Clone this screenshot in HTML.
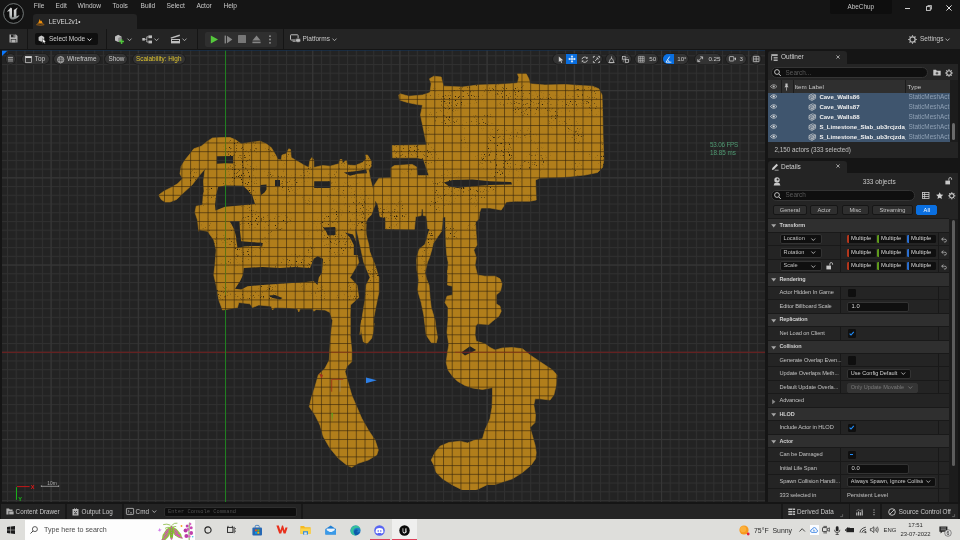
<!DOCTYPE html>
<html>
<head>
<meta charset="utf-8">
<title>LEVEL2v1 - Unreal Editor</title>
<style>
*{box-sizing:border-box;margin:0;padding:0}
html,body{width:960px;height:540px;overflow:hidden;background:#151515}
body{position:relative;will-change:transform;font-family:"Liberation Sans",sans-serif;font-size:6.4px;color:#c0c0c0;line-height:1}
.a{position:absolute;white-space:nowrap}
.t{position:absolute;white-space:nowrap;transform:translateY(-50%)}
svg{position:absolute;overflow:visible}
/* top */
#titlebar{left:0;top:0;width:960px;height:29px;background:#151515}
#tab{left:33px;top:14px;width:104px;height:15px;background:#242424;border-radius:3px 3px 0 0}
#toolbar{left:0;top:29px;width:960px;height:20px;background:#242424}
.sep{position:absolute;top:29px;width:1px;height:20px;background:#151515}
.dk{position:absolute;background:#0f0f0f;border-radius:2px}
/* viewport */
#vp{left:2px;top:50px;width:763px;height:452px;background:#252525;overflow:hidden}
.pill{position:absolute;top:54.2px;height:9.8px;border-radius:5px;background:#333;box-shadow:0 0 0 0.6px #181818;color:#c8c8c8;font-size:6.3px;line-height:9px;white-space:nowrap}
/* right */
.panel{position:absolute;background:#242424}
.ptab{position:absolute;background:#242424;border-radius:3px 3px 0 0;height:13px;width:79px;left:768px}
.hdr{position:absolute;left:768px;width:181px;height:12.5px;background:#2f2f2f}
.row{position:absolute;left:768px;width:181px;height:12.6px;background:#242424}
.hl{position:absolute;font-weight:bold;font-size:5.5px;letter-spacing:-0.15px;color:#d0d0d0;white-space:nowrap;transform:translateY(-50%);left:779.5px}
.rl{position:absolute;font-size:5.7px;letter-spacing:-0.1px;color:#c0c0c0;white-space:nowrap;transform:translateY(-50%);left:779.5px}
.tri{position:absolute;left:771px;width:0;height:0;border-left:2.4px solid transparent;border-right:2.4px solid transparent;border-top:3px solid #b0b0b0}
.cb{position:absolute;left:847.5px;width:8px;height:8.4px;background:#0f0f0f;border-radius:1.2px}
.inp{position:absolute;background:#0f0f0f;border-radius:2px;border:0.5px solid #333;color:#d0d0d0}
.mul{position:absolute;height:8px;width:28.5px;background:#0f0f0f;border-radius:1.2px;color:#d8d8d8;font-size:5.85px;line-height:7.4px;padding-left:3.8px;overflow:hidden}
.mul i{position:absolute;left:0;top:0;width:1.6px;height:8px}
.fb{position:absolute;top:205.4px;height:10px;border-radius:2px;background:#2f2f2f;border:0.6px solid #161616;color:#c0c0c0;text-align:center;line-height:8.6px;font-size:5.7px}
/* bottom */
#status{left:0;top:504px;width:960px;height:15.5px;background:#242424}
#taskbar{left:0;top:519.4px;width:960px;height:20.6px;background:#dededb;color:#222}
</style>
</head>
<body>
<!--TOP-->
<div class="a" id="titlebar"></div>
<!-- UE logo -->
<svg style="left:3px;top:2.7px" width="21" height="21" viewBox="0 0 21 21"><defs><linearGradient id="ug" x1="0" y1="0" x2="0" y2="1"><stop offset="0" stop-color="#d8d8d8"/><stop offset="0.6" stop-color="#c4c8c8"/><stop offset="1" stop-color="#7a8080"/></linearGradient></defs><circle cx="10.5" cy="10.5" r="9.9" fill="#0e0e0e" stroke="#7f8585" stroke-width="0.9"/><path d="M3.8 8.8 L7.8 4.6 L9 5.6 L9 13.6 Q9 14.6 9.8 14.6 L10.8 14 L10.8 7 L14.8 4.6 L13.4 7 L13.4 13.6 L16.6 12 Q15.4 14.4 13.4 15.4 L10.6 16.6 Q9.6 16.2 8.6 16.6 Q6.4 15.6 6.4 13.6 L6.4 8.2 Q5.2 8 3.8 8.8 Z" fill="url(#ug)"/></svg>
<div class="t" style="left:33.7px;top:5.7px;font-size:6.6px;color:#c8c8c8">File</div>
<div class="t" style="left:55.5px;top:5.7px;font-size:6.6px;color:#c8c8c8">Edit</div>
<div class="t" style="left:77.6px;top:5.7px;font-size:6.6px;color:#c8c8c8">Window</div>
<div class="t" style="left:112.5px;top:5.7px;font-size:6.6px;color:#c8c8c8">Tools</div>
<div class="t" style="left:140.6px;top:5.7px;font-size:6.6px;color:#c8c8c8">Build</div>
<div class="t" style="left:166.6px;top:5.7px;font-size:6.6px;color:#c8c8c8">Select</div>
<div class="t" style="left:196.4px;top:5.7px;font-size:6.6px;color:#c8c8c8">Actor</div>
<div class="t" style="left:223.4px;top:5.7px;font-size:6.6px;color:#c8c8c8">Help</div>
<div class="a" id="tab"></div>
<svg style="left:36.2px;top:17.6px" width="8.6" height="8" viewBox="0 0 8.6 8"><path d="M0.8 5.6 L2.4 4.8 L3.7 0.9 L4.7 3.2 L5.5 2.4 L6.4 4.8 L7.8 5.6 Z" fill="#f0900c"/><path d="M0.3 6.7 Q4.3 7.7 8.3 6.7" stroke="#d87c10" stroke-width="0.7" fill="none"/></svg>
<div class="t" style="left:48.8px;top:22px;font-size:6.3px;letter-spacing:-0.05px;color:#d8d8d8">LEVEL2v1•</div>
<div class="a" style="left:830px;top:0;width:61.5px;height:13.5px;background:#0e0e0e;border-radius:0 0 2px 2px"></div>
<div class="t" style="left:847.5px;top:6.6px;font-size:6.4px;color:#c8c8c8">AbeChup</div>
<div class="a" style="left:905px;top:8.3px;width:5px;height:0.8px;background:#d0d0d0"></div>
<svg style="left:925.5px;top:5px" width="6" height="6" viewBox="0 0 6 6"><rect x="0.5" y="1.6" width="3.8" height="3.8" fill="none" stroke="#d0d0d0" stroke-width="0.9"/><path d="M1.8 1.4 V0.5 H5.5 V4.2 H4.5" fill="none" stroke="#d0d0d0" stroke-width="0.8"/></svg>
<svg style="left:946.2px;top:5.2px" width="6" height="6" viewBox="0 0 6 6"><path d="M0.4 0.4 L5.6 5.6 M5.6 0.4 L0.4 5.6" stroke="#e0e0e0" stroke-width="1"/></svg>
<!-- toolbar -->
<div class="a" id="toolbar"></div>
<svg style="left:8.6px;top:34.1px" width="9" height="9" viewBox="0 0 9 9"><path d="M0.5 0.5 H7 L8.5 2 V8.5 H0.5 Z" fill="#b4b4b4"/><rect x="2" y="0.5" width="4.2" height="2.8" fill="#242424"/><rect x="4.6" y="0.9" width="1" height="2" fill="#b4b4b4"/><rect x="1.8" y="5" width="5.4" height="3.5" fill="#242424"/><rect x="2.4" y="5.6" width="4.2" height="2.9" fill="#b4b4b4"/></svg>
<div class="sep" style="left:26.5px"></div>
<div class="dk" style="left:35px;top:33px;width:63px;height:12px"></div>
<svg style="left:38px;top:35px" width="9" height="9" viewBox="0 0 9 9"><path d="M0.6 2 L3.4 0.6 L6.2 2 V5.4 L3.4 6.8 L0.6 5.4 Z" fill="#c8c8c8"/><path d="M4.6 3.6 L4.6 8.4 L5.8 7.3 L6.6 8.8 L7.3 8.4 L6.6 7 L8 6.8 Z" fill="#fff" stroke="#0f0f0f" stroke-width="0.4"/></svg>
<div class="t" style="left:49px;top:39px;font-size:6.5px;color:#d0d0d0">Select Mode</div>
<svg class="chev" style="left:87.3px;top:37.5px" width="5" height="3.4" viewBox="0 0 5 3.4"><path d="M0.5 0.6 L2.5 2.7 L4.5 0.6" fill="none" stroke="#d8d8d8" stroke-width="1"/></svg>
<div class="sep" style="left:106px"></div>
<svg style="left:114px;top:34px" width="11" height="11" viewBox="0 0 11 11"><path d="M1 2.4 L4.2 0.8 L7.4 2.4 V6.4 L4.2 8 L1 6.4 Z" fill="#bdbdbd"/><path d="M4.2 4 L7.4 2.4 V6.4 L4.2 8 Z" fill="#8f8f8f"/><path d="M7.6 5.2 V10 M5.2 7.6 H10" stroke="#4ec43a" stroke-width="1.5"/></svg>
<svg style="left:126.8px;top:37.5px" width="5" height="3.4" viewBox="0 0 5 3.4"><path d="M0.5 0.6 L2.5 2.7 L4.5 0.6" fill="none" stroke="#c0c0c0" stroke-width="0.8"/></svg>
<svg style="left:141.5px;top:34.5px" width="11" height="9" viewBox="0 0 11 9"><rect x="0.3" y="3" width="2.6" height="2.6" fill="#bdbdbd"/><rect x="6.4" y="0.4" width="3.6" height="2.8" fill="#bdbdbd"/><rect x="6.4" y="5.6" width="3.6" height="2.8" fill="#bdbdbd"/><path d="M2.9 4.3 H4.8 M4.8 1.8 V7 M4.8 1.8 H6.4 M4.8 7 H6.4" stroke="#bdbdbd" stroke-width="0.8" fill="none"/></svg>
<svg style="left:154px;top:37.5px" width="5" height="3.4" viewBox="0 0 5 3.4"><path d="M0.5 0.6 L2.5 2.7 L4.5 0.6" fill="none" stroke="#c0c0c0" stroke-width="0.8"/></svg>
<svg style="left:169.5px;top:34px" width="11" height="10" viewBox="0 0 11 10"><path d="M0.6 3.4 L9.6 0.6 L10 2 L1 4.8 Z" fill="#bdbdbd"/><rect x="1" y="5" width="9" height="4.4" fill="#bdbdbd"/><rect x="2" y="6" width="7" height="1" fill="#242424"/></svg>
<svg style="left:181.5px;top:37.5px" width="5" height="3.4" viewBox="0 0 5 3.4"><path d="M0.5 0.6 L2.5 2.7 L4.5 0.6" fill="none" stroke="#c0c0c0" stroke-width="0.8"/></svg>
<div class="sep" style="left:197px"></div>
<div class="a" style="left:205px;top:31.5px;width:71.5px;height:15.5px;background:#2f2f2f;border-radius:2px"></div>
<svg style="left:209.5px;top:34.5px" width="9" height="9" viewBox="0 0 9 9"><path d="M0.8 0.4 L8 4.5 L0.8 8.6 Z" fill="#55c83c"/></svg>
<svg style="left:223.5px;top:34.5px" width="9" height="9" viewBox="0 0 9 9"><rect x="0.6" y="0.6" width="1.4" height="7.8" fill="#858585"/><path d="M3 0.8 L8.4 4.5 L3 8.2 Z" fill="#858585"/></svg>

<div class="a" style="left:238.3px;top:35.3px;width:7.4px;height:7.4px;background:#777;border-radius:0.6px"></div>
<svg style="left:251.5px;top:34.8px" width="9" height="9" viewBox="0 0 9 9"><path d="M4.5 0.6 L8.6 5.6 H0.4 Z" fill="#858585"/><rect x="0.4" y="6.6" width="8.2" height="1.6" fill="#858585"/></svg>
<svg style="left:269px;top:34.5px" width="2" height="9" viewBox="0 0 2 9"><circle cx="1" cy="1.2" r="0.9" fill="#999"/><circle cx="1" cy="4.5" r="0.9" fill="#999"/><circle cx="1" cy="7.8" r="0.9" fill="#999"/></svg>
<div class="sep" style="left:283px"></div>
<svg style="left:290px;top:34px" width="11" height="10" viewBox="0 0 11 10"><rect x="0.5" y="0.8" width="7.6" height="5.2" rx="0.6" fill="none" stroke="#bdbdbd" stroke-width="1"/><rect x="2.6" y="6.8" width="3.4" height="0.9" fill="#bdbdbd"/><rect x="5.6" y="4.6" width="5" height="3.6" rx="1.4" fill="#bdbdbd" stroke="#242424" stroke-width="0.5"/></svg>
<div class="t" style="left:302.5px;top:39px;font-size:6.5px;color:#c8c8c8">Platforms</div>
<svg style="left:332px;top:37.5px" width="5" height="3.4" viewBox="0 0 5 3.4"><path d="M0.5 0.6 L2.5 2.7 L4.5 0.6" fill="none" stroke="#c0c0c0" stroke-width="0.8"/></svg>
<svg style="left:908px;top:34.5px" width="9" height="9" viewBox="0 0 9 9"><circle cx="4.5" cy="4.5" r="2.6" fill="none" stroke="#c0c0c0" stroke-width="1.2"/><path d="M4.5 0.2 V1.6 M4.5 7.4 V8.8 M0.2 4.5 H1.6 M7.4 4.5 H8.8 M1.5 1.5 L2.4 2.4 M6.6 6.6 L7.5 7.5 M1.5 7.5 L2.4 6.6 M6.6 2.4 L7.5 1.5" stroke="#c0c0c0" stroke-width="1.1"/></svg>
<div class="t" style="left:920px;top:39px;font-size:6.5px;color:#c8c8c8">Settings</div>
<svg style="left:945px;top:37.5px" width="5" height="3.4" viewBox="0 0 5 3.4"><path d="M0.5 0.6 L2.5 2.7 L4.5 0.6" fill="none" stroke="#c0c0c0" stroke-width="0.8"/></svg>

<!--/TOP-->
<!--VIEWPORT-->
<div class="a" id="vp">
<svg style="left:-2px;top:-50px" width="960" height="540" viewBox="0 0 960 540">
<defs>
<pattern id="g1" x="7.00" y="2.95" width="8.72" height="8.72" patternUnits="userSpaceOnUse"><rect x="0" y="0" width="1" height="8.72" fill="#303030"/><rect x="0" y="0" width="8.72" height="1" fill="#303030"/></pattern>
<pattern id="g2" x="50.60" y="2.95" width="87.2" height="87.2" patternUnits="userSpaceOnUse"><rect x="0" y="0" width="1" height="87.2" fill="#363636"/><rect x="0" y="0" width="87.2" height="1" fill="#363636"/></pattern>
<pattern id="gd" x="7.00" y="2.95" width="8.72" height="8.72" patternUnits="userSpaceOnUse"><rect x="0" y="0" width="1" height="8.72" fill="#33240c" fill-opacity="0.62"/><rect x="0" y="0" width="8.72" height="1" fill="#33240c" fill-opacity="0.62"/></pattern>
<mask id="m" maskUnits="userSpaceOnUse" x="0" y="0" width="960" height="540"><path d="M158.8 195.0 L163.8 191.2 L171.2 187.5 L177.5 183.8 L182.5 178.8 L180.0 173.8 L181.2 166.2 L185.0 160.0 L190.0 153.8 L193.8 148.8 L201.2 146.2 L207.5 141.2 L212.5 138.0 L222.5 137.5 L230.0 137.5 L235.0 139.5 L241.2 143.8 L250.0 142.5 L260.0 141.2 L266.2 143.8 L271.2 147.5 L275.0 153.8 L278.0 159.5 L281.2 160.0 L282.0 155.0 L286.2 153.8 L288.8 148.8 L290.5 149.5 L291.2 157.5 L297.5 161.2 L303.8 165.0 L308.8 167.5 L310.0 160.0 L312.0 157.5 L313.8 160.0 L313.8 167.5 L322.5 165.5 L330.0 166.2 L338.8 163.8 L340.0 159.5 L342.0 159.5 L342.5 163.8 L346.2 160.0 L347.5 165.0 L355.0 165.5 L362.5 162.5 L366.2 158.8 L365.5 155.0 L367.5 155.0 L371.2 161.2 L371.2 166.2 L368.8 170.0 L370.0 177.5 L372.5 187.5 L375.0 195.0 L375.0 205.0 L371.2 215.0 L367.5 218.8 L365.0 225.0 L366.2 235.0 L368.8 245.0 L370.0 255.0 L355.0 227.5 L356.2 250.0 L358.8 262.5 L353.0 272.5 L350.0 277.5 L357.0 285.0 L358.8 297.5 L350.5 305.0 L350.0 320.0 L350.0 335.0 L350.0 316.7 L350.0 333.3 L351.7 350.0 L351.7 361.7 L346.7 366.7 L345.0 371.7 L348.3 383.3 L351.7 395.0 L356.7 406.7 L361.7 418.3 L368.3 430.0 L375.0 440.0 L378.3 450.0 L376.7 455.0 L368.3 460.0 L358.3 463.3 L351.7 467.3 L346.7 465.0 L338.3 458.3 L330.0 448.3 L323.3 436.7 L320.0 425.0 L315.0 415.0 L309.3 406.7 L311.7 396.7 L315.0 386.7 L318.3 375.0 L325.0 368.3 L329.3 360.0 L330.0 346.7 L331.0 333.3 L332.7 320.0 L330.0 310.0 L332.5 320.0 L330.0 312.5 L325.0 310.0 L316.2 309.5 L313.8 311.2 L312.5 308.8 L300.0 308.8 L298.8 312.0 L297.5 308.8 L290.0 308.0 L275.0 307.5 L272.5 310.0 L271.2 306.2 L258.8 305.0 L252.5 307.5 L250.0 303.8 L238.8 302.5 L237.5 307.5 L222.5 310.0 L218.8 300.0 L216.2 285.0 L213.8 275.0 L215.0 265.0 L216.2 250.0 L213.8 240.0 L207.5 231.2 L200.0 230.0 L198.8 231.2 L197.5 220.0 L195.0 212.5 L196.2 206.2 L202.5 205.0 L203.2 195.0 L204.0 191.0 L203.5 181.0 L204.8 170.8 L206.5 167.2 L199.5 175.2 L192.2 184.8 L184.8 191.5 L176.5 199.5 L170.0 202.0 L165.2 202.0 L161.2 199.5 Z M357.5 225.5 L366.2 223.8 L365.5 242.5 L370.0 252.5 L375.0 265.0 L378.8 277.5 L378.8 292.5 L376.2 305.0 L373.8 317.5 L372.5 335.0 L374.0 323.3 L373.3 330.0 L371.7 338.3 L366.7 344.0 L363.3 341.7 L361.7 333.3 L360.7 326.7 L361.7 320.0 L360.0 335.0 L362.5 315.0 L365.0 300.0 L366.2 285.0 L370.0 277.5 L363.8 262.5 L360.0 245.0 L356.2 227.5 Z M398.8 95.0 L400.0 93.8 L408.8 96.2 L422.5 95.0 L430.0 92.5 L431.2 83.8 L429.5 78.8 L433.8 76.2 L441.2 77.0 L442.5 82.5 L443.8 86.2 L462.5 87.0 L477.5 85.0 L495.0 84.5 L510.0 83.8 L517.5 83.0 L518.8 77.5 L517.5 73.8 L526.2 73.8 L528.8 78.8 L530.0 83.8 L545.0 85.0 L565.0 84.5 L580.0 85.5 L592.5 86.2 L598.8 88.8 L602.0 95.0 L602.5 110.0 L603.0 135.0 L603.8 160.0 L602.5 167.5 L602.5 167.5 L597.5 172.5 L585.0 175.0 L565.0 177.0 L550.0 177.5 L540.0 178.0 L535.5 180.0 L536.2 200.0 L530.0 201.2 L515.0 201.2 L506.2 202.0 L503.8 206.2 L501.2 210.0 L490.0 208.0 L481.2 208.0 L479.5 212.5 L478.8 218.8 L475.5 222.5 L476.2 235.0 L477.0 245.0 L473.8 250.0 L476.2 257.5 L475.0 265.0 L476.2 270.0 L477.5 275.0 L485.0 276.2 L495.0 276.2 L500.0 278.8 L502.0 283.8 L500.5 291.2 L496.2 295.0 L496.2 303.8 L500.0 306.2 L501.2 311.2 L498.8 316.2 L492.5 321.2 L488.8 324.5 L477.5 323.8 L475.5 326.2 L475.0 335.0 L476.2 341.2 L485.0 343.8 L490.0 347.5 L495.0 350.0 L502.5 348.0 L512.5 347.5 L522.5 348.8 L530.0 355.0 L537.5 360.0 L545.0 365.0 L552.5 370.0 L557.0 375.0 L557.0 375.0 L556.2 385.0 L553.8 395.0 L550.0 400.0 L540.0 398.8 L535.0 398.8 L533.8 405.0 L535.5 415.0 L535.0 422.5 L530.0 427.5 L532.5 436.2 L535.0 445.0 L536.2 452.5 L535.5 458.8 L531.2 465.0 L522.5 472.5 L512.5 478.8 L502.5 482.0 L495.0 484.5 L487.5 484.5 L478.8 488.8 L470.0 492.5 L462.5 490.0 L452.5 485.0 L442.5 478.8 L436.2 472.5 L433.8 465.0 L431.2 460.0 L435.0 452.5 L440.0 446.2 L448.8 442.5 L460.0 441.2 L467.5 443.0 L475.0 440.0 L482.5 438.8 L485.0 430.0 L490.0 418.8 L492.0 407.5 L492.5 395.0 L492.5 387.5 L492.5 387.5 L482.5 389.5 L472.5 388.0 L465.0 385.5 L457.5 381.2 L452.5 376.2 L448.0 370.0 L446.2 362.5 L447.5 352.5 L448.8 345.0 L447.0 332.5 L448.0 320.0 L448.0 307.5 L445.0 302.5 L447.0 296.2 L452.5 295.0 L452.5 286.2 L447.5 285.0 L448.0 270.0 L447.5 275.0 L448.2 262.5 L446.8 255.0 L446.0 245.0 L445.5 225.0 L445.5 215.5 L427.8 228.9 L426.7 216.0 L423.3 215.6 L422.9 208.9 L421.6 208.9 L421.1 215.6 L415.6 216.7 L414.4 229.3 L385.6 228.9 L385.6 217.8 L380.0 216.7 L377.8 204.4 L372.2 195.6 L373.3 186.7 L378.9 178.2 L391.1 177.8 L391.1 167.8 L394.4 165.6 L412.2 164.4 L416.7 167.1 L417.3 175.6 L428.9 175.6 L423.3 158.9 L416.7 157.8 L392.7 157.8 L392.2 145.6 L426.7 144.9 L420.5 115.0 L422.5 105.0 L417.5 104.5 L407.5 102.5 L399.5 100.0 Z M429.4 229.4 L426.2 215.5 L423.5 214.0 L445.6 214.0 L445.6 217.0 L442.8 217.0 L441.7 231.0 L437.8 236.7 L433.3 243.3 L431.7 250.0 L429.4 257.8 L427.5 262.0 L425.0 272.5 L426.5 279.0 L429.0 285.0 L430.0 297.5 L431.2 307.5 L435.0 320.0 L436.2 330.0 L437.5 337.5 L436.2 343.0 L431.2 342.5 L426.2 335.0 L425.0 325.0 L423.8 315.0 L421.2 302.5 L417.5 290.0 L418.8 280.0 L417.0 270.0 L416.7 260.0 L417.2 255.6 L419.4 248.9 L425.0 244.4 Z" fill="#fff" stroke="#fff" stroke-width="0.6" stroke-linejoin="round"/><path d="M216.8 156.2 L233.2 156.0 L233.2 163.5 L225.0 163.2 L216.8 163.8 Z M218.0 187.0 L225.0 185.5 L243.0 185.8 L248.0 190.5 L252.5 196.2 L255.0 204.0 L240.0 205.5 L225.0 206.8 L215.5 210.5 L215.0 205.0 L216.2 195.0 Z M260.5 185.0 L266.5 184.5 L266.5 189.5 L264.5 192.5 L261.2 195.0 L260.0 190.0 Z M275.0 180.0 L280.0 180.0 L280.0 186.2 L275.0 186.2 Z M314.2 181.2 L330.5 181.2 L330.5 188.0 L314.2 188.0 Z M343.8 172.5 L355.0 171.2 L366.2 169.5 L367.0 173.2 L357.5 173.8 L350.0 175.8 Z M230.0 221.2 L238.8 221.2 L240.0 230.0 L238.5 240.0 L240.5 243.8 L261.2 242.5 L262.5 245.5 L243.8 246.5 L237.5 248.0 L236.2 240.0 L237.5 231.2 L233.8 228.8 Z M324.2 227.5 L335.5 227.5 L335.5 235.0 L328.0 235.5 Z M345.0 232.5 L353.0 234.5 L357.5 245.0 L358.8 255.0 L353.8 255.0 L353.8 245.0 L350.0 237.5 Z M243.8 268.0 L262.5 267.0 L280.0 268.0 L295.0 267.0 L310.0 268.0 L313.8 258.8 L317.5 256.2 L323.0 258.8 L322.0 272.5 L318.8 277.5 L317.5 285.0 L313.8 281.2 L300.0 282.5 L280.0 283.8 L262.5 285.0 L247.5 286.2 L241.2 289.5 L235.0 288.8 L240.0 281.2 L243.0 275.0 Z M230.0 222.0 L239.5 221.2 L240.0 231.2 L241.2 241.2 L262.5 243.0 L262.5 246.2 L246.2 245.5 L240.0 244.5 L237.5 247.5 L236.2 237.5 L233.8 227.5 Z M323.0 227.5 L335.0 227.0 L335.0 234.5 L327.5 235.0 L326.2 231.2 Z M268.8 295.5 L275.0 295.0 L282.5 298.0 L280.0 299.5 L272.5 298.0 Z M443.8 182.5 L452.5 180.0 L472.5 179.5 L490.0 181.2 L511.2 182.0 L512.0 184.5 L490.0 185.0 L472.5 186.2 L457.5 188.0 L448.8 186.2 Z M461.2 352.5 L470.0 346.2 L476.2 350.0 L465.0 355.5 Z" fill="#000"/></mask>
<filter id="sp" x="0" y="0" width="100%" height="100%" color-interpolation-filters="sRGB"><feTurbulence type="fractalNoise" baseFrequency="0.85" numOctaves="2" seed="7" result="n"/><feColorMatrix in="n" type="matrix" values="0 0 0 0 0.16  0 0 0 0 0.12  0 0 0 0 0.05  7 0 0 0 -4.45" result="a"/><feTurbulence type="fractalNoise" baseFrequency="0.035" numOctaves="2" seed="11" result="l"/><feColorMatrix in="l" type="matrix" values="0 0 0 0 0  0 0 0 0 0  0 0 0 0 0  0 7 0 0 -3.4" result="lm"/><feComposite in="a" in2="lm" operator="in"/></filter>
</defs>
<rect x="0" y="50" width="766" height="453" fill="#232323"/>
<rect x="0" y="50" width="766" height="453" fill="url(#g1)"/>
<rect x="0" y="50" width="766" height="453" fill="url(#g2)"/>
<rect x="0" y="351.8" width="766" height="0.9" fill="#7a1a1a"/>
<rect x="225.05" y="50" width="0.9" height="453" fill="#1f8a1f"/>
<g mask="url(#m)"><rect x="140" y="60" width="500" height="430" fill="#b17e1b"/><rect x="140" y="60" width="500" height="430" fill="url(#gd)"/>
<rect x="425" y="80" width="185" height="160" fill="#000" filter="url(#sp)"/><rect x="190" y="140" width="250" height="160" fill="#000" filter="url(#sp)"/>
<rect x="331" y="351.8" width="20" height="0.9" fill="#8a3a14"/><rect x="225.05" y="130" width="0.9" height="165" fill="#5f7a14"/><rect x="455" y="351.8" width="160" height="0.9" fill="#8a3a14"/>
</g>
<path d="M366 377.4 L376.8 380.3 L366 383.3 Z" fill="#2d7fe6"/>
<path d="M319 373.4 L323 375 L321.6 378.6 Z" fill="#a3301a"/>
<path d="M331.7 391.7 V379.3 H343.3" fill="none" stroke="#9a3418" stroke-width="0.9"/>
<path d="M340 380 V391.7" fill="none" stroke="#9a8a72" stroke-width="0.7"/>
<path d="M331.4 413 L333 413 L332 422 Z" fill="#5aa01e"/>
<!-- axis indicator -->
<path d="M17 486.6 H29.6" stroke="#c01818" stroke-width="1"/>
<path d="M16.5 487.2 V499.8" stroke="#18b018" stroke-width="1"/>
<text x="30.8" y="488.8" font-size="5.6" font-weight="bold" fill="#e01818" font-family="Liberation Sans, sans-serif">X</text>
<text x="18.2" y="501.4" font-size="5.6" font-weight="bold" fill="#18c018" font-family="Liberation Sans, sans-serif">Y</text>
<path d="M41 486.3 H59 M41.3 485.3 V486.8 M58.7 485.3 V486.8" stroke="#b8b8b8" stroke-width="0.7" fill="none"/>
<text x="52" y="485.2" font-size="4.8" fill="#a8a8a8" text-anchor="middle" font-family="Liberation Sans, sans-serif">10m</text>
<text x="710" y="146.9" font-size="6.3" fill="#4f9a72" font-family="Liberation Sans, sans-serif" textLength="28.3">53.06 FPS</text>
<text x="710" y="154.8" font-size="6.3" fill="#4f9a72" font-family="Liberation Sans, sans-serif" textLength="26">18.85 ms</text>
<path d="M2 50.6 H7.6 L2 56 Z" fill="#0a78ff"/>
<rect x="2" y="50" width="764" height="0.7" fill="#16324f"/>
</svg>
</div>
<!-- viewport left pills -->
<div class="pill" style="left:5.8px;width:9.6px;top:54.3px;height:9.6px"></div>
<svg style="left:8.2px;top:57px" width="5" height="4.4" viewBox="0 0 5 4.4"><path d="M0 0.4 H5 M0 2.2 H5 M0 4 H5" stroke="#c8c8c8" stroke-width="0.75"/></svg>
<div class="pill" style="left:21.5px;width:27px"></div>
<svg style="left:25px;top:55.8px" width="7" height="7" viewBox="0 0 7 7"><rect x="0.4" y="0.4" width="6.2" height="6.2" fill="none" stroke="#c8c8c8" stroke-width="0.7"/><rect x="0.4" y="0.4" width="6.2" height="1.6" fill="#d8d8d8"/></svg>
<div class="t" style="left:34.8px;top:59.3px;font-size:6.4px;color:#c8c8c8">Top</div>
<div class="pill" style="left:53.8px;width:46.2px"></div>
<svg style="left:57.2px;top:55.6px" width="7.4" height="7.4" viewBox="0 0 7.4 7.4"><circle cx="3.7" cy="3.7" r="3.2" fill="none" stroke="#c0c0c0" stroke-width="0.7"/><ellipse cx="3.7" cy="3.7" rx="1.5" ry="3.2" fill="none" stroke="#c0c0c0" stroke-width="0.5"/><path d="M0.5 3.7 H6.9 M1 2 H6.4 M1 5.4 H6.4" stroke="#c0c0c0" stroke-width="0.5"/></svg>
<div class="t" style="left:67px;top:59.3px;font-size:6.4px;color:#c8c8c8">Wireframe</div>
<div class="pill" style="left:104.8px;width:22.4px"></div>
<div class="t" style="left:108.5px;top:59.3px;font-size:6.4px;color:#c8c8c8">Show</div>
<div class="pill" style="left:132.6px;width:52.6px"></div>
<div class="t" style="left:136px;top:59.3px;font-size:6.4px;color:#dcc22e">Scalability: High</div>
<!-- viewport right tools -->
<div class="pill" style="left:552.7px;width:49.6px;top:54px;height:10.3px;overflow:hidden"><div class="a" style="left:13px;top:-1px;width:11.2px;height:12px;background:#0a6fe0"></div></div>
<svg style="left:557.5px;top:55.6px" width="6" height="7.4" viewBox="0 0 6 7.4"><path d="M0.8 0.4 L0.8 6 L2.3 4.7 L3.3 6.9 L4.2 6.5 L3.2 4.4 L5.2 4.2 Z" fill="#d0d0d0"/></svg>
<svg style="left:567.7px;top:55.3px" width="8" height="8" viewBox="0 0 8 8"><path d="M4 0.2 L5.3 1.8 H4.4 V3.6 H6.2 V2.7 L7.8 4 L6.2 5.3 V4.4 H4.4 V6.2 H5.3 L4 7.8 L2.7 6.2 H3.6 V4.4 H1.8 V5.3 L0.2 4 L1.8 2.7 V3.6 H3.6 V1.8 H2.7 Z" fill="#fff"/></svg>
<svg style="left:580.5px;top:55.6px" width="7.4" height="7.4" viewBox="0 0 7.4 7.4"><path d="M1 3.2 A2.8 2.8 0 0 1 6 2.2 M6.4 4.2 A2.8 2.8 0 0 1 1.4 5.2" fill="none" stroke="#c8c8c8" stroke-width="0.9"/><path d="M6.6 0.8 V2.8 H4.6 Z M0.8 6.6 V4.6 H2.8 Z" fill="#c8c8c8"/></svg>
<svg style="left:592.5px;top:55.8px" width="7" height="7" viewBox="0 0 7 7"><path d="M0.4 2 V0.4 H2 M5 0.4 H6.6 V2 M6.6 5 V6.6 H5 M2 6.6 H0.4 V5" fill="none" stroke="#c8c8c8" stroke-width="0.8"/><path d="M2 5 L5 2 M3.4 2 H5 V3.6" stroke="#c8c8c8" stroke-width="0.8" fill="none"/></svg>
<div class="pill" style="left:606.2px;width:10.2px;top:54px;height:10.3px"></div>
<svg style="left:608px;top:55.6px" width="7" height="7.2" viewBox="0 0 7 7.2"><path d="M3.5 0.4 V3 M1.2 6.6 L2 3.4 Q3.5 1.8 5 3.4 L5.8 6.6 Z M0.4 6.6 H6.6" fill="none" stroke="#c8c8c8" stroke-width="0.7"/></svg>
<div class="pill" style="left:620.6px;width:10.2px;top:54px;height:10.3px"></div>
<svg style="left:622.3px;top:55.8px" width="7" height="7" viewBox="0 0 7 7"><rect x="0.6" y="0.6" width="2.6" height="2.6" fill="none" stroke="#c8c8c8" stroke-width="0.7"/><rect x="3.6" y="3.6" width="2.8" height="2.8" fill="none" stroke="#c8c8c8" stroke-width="0.7"/><path d="M1 5.4 L2.4 4.4 M5.4 1 L4.4 2.4" stroke="#c8c8c8" stroke-width="0.6"/></svg>
<div class="pill" style="left:635.2px;width:23.3px;top:54px;height:10.3px"></div>
<svg style="left:638px;top:55.8px" width="6.6" height="6.6" viewBox="0 0 6.6 6.6"><path d="M0.4 0.4 H6.2 V6.2 H0.4 Z M2.3 0.4 V6.2 M4.3 0.4 V6.2 M0.4 2.3 H6.2 M0.4 4.3 H6.2" fill="none" stroke="#c8c8c8" stroke-width="0.6"/></svg>
<div class="t" style="left:649.2px;top:59.2px;font-size:6.2px;color:#c8c8c8">50</div>
<div class="pill" style="left:662.7px;width:24.9px;top:54px;height:10.3px;overflow:hidden"><div class="a" style="left:-1px;top:-1px;width:12.4px;height:12px;background:#0a6fe0"></div></div>
<svg style="left:665.4px;top:55.8px" width="7" height="7" viewBox="0 0 7 7"><path d="M4.6 0.6 L1 6.2 H6.4" fill="none" stroke="#fff" stroke-width="0.8"/><path d="M2.4 3.8 Q4 4.4 4.2 6.2" fill="none" stroke="#fff" stroke-width="0.7"/></svg>
<div class="t" style="left:677.2px;top:59.2px;font-size:6.2px;color:#c8c8c8">10°</div>
<div class="pill" style="left:694.8px;width:26.7px;top:54px;height:10.3px"></div>
<svg style="left:697.4px;top:56px" width="6.4" height="6.4" viewBox="0 0 6.4 6.4"><path d="M1 5.4 L5.4 1 M3.2 0.8 H5.6 V3.2 M0.8 3.2 V5.6 H3.2" fill="none" stroke="#c8c8c8" stroke-width="0.85"/></svg>
<div class="t" style="left:708.4px;top:59.2px;font-size:6.2px;color:#c8c8c8">0.25</div>
<div class="pill" style="left:726px;width:19.6px;top:54px;height:10.3px"></div>
<svg style="left:729px;top:56.4px" width="7.4" height="5.6" viewBox="0 0 7.4 5.6"><rect x="0.4" y="0.6" width="4.4" height="4.4" rx="0.5" fill="none" stroke="#c8c8c8" stroke-width="0.8"/><path d="M5.2 2.8 L7 1.2 V4.4 Z" fill="#c8c8c8"/></svg>
<div class="t" style="left:739.6px;top:59.2px;font-size:6.2px;color:#c8c8c8">3</div>
<div class="pill" style="left:751px;width:10.4px;top:54px;height:10.3px"></div>
<svg style="left:753px;top:56.2px" width="6.4" height="6" viewBox="0 0 6.4 6"><path d="M0.4 0.4 H6 V5.6 H0.4 Z M3.2 0.4 V5.6 M0.4 3 H6" fill="none" stroke="#c8c8c8" stroke-width="0.7"/></svg>

<!--/VIEWPORT-->
<!--RIGHT-->
<div class="a" style="left:768px;top:50px;width:190px;height:14px;background:#151515"></div>
<div class="ptab" style="top:50.5px"></div>
<svg style="left:771.2px;top:53.5px" width="7" height="7" viewBox="0 0 7 7"><rect x="0.3" y="0.3" width="6.4" height="1.5" fill="#d0d0d0"/><path d="M0.6 2 V6.4 M2.6 3.4 H6.7 M2.6 5 H6.7 M2.6 6.5 H6.7" stroke="#d0d0d0" stroke-width="0.8"/></svg>
<div class="t" style="left:781px;top:57px;font-size:6.5px;color:#d0d0d0">Outliner</div>
<svg style="left:836.3px;top:55px" width="4" height="4" viewBox="0 0 4 4"><path d="M0.4 0.4 L3.6 3.6 M3.6 0.4 L0.4 3.6" stroke="#d0d0d0" stroke-width="0.7"/></svg>
<div class="panel" style="left:768px;top:63.5px;width:190px;height:94px"></div>
<div class="a" style="left:771.3px;top:67.3px;width:156.6px;height:11px;background:#0f0f0f;border-radius:5.5px;border:0.7px solid #343434"></div>
<svg style="left:774.3px;top:69.2px" width="7.4" height="7.6" viewBox="0 0 7.4 7.6"><circle cx="3" cy="3" r="2.4" fill="none" stroke="#d0d0d0" stroke-width="0.9"/><path d="M4.8 4.9 L6.8 7" stroke="#d0d0d0" stroke-width="1"/></svg>
<div class="t" style="left:785.6px;top:72.7px;font-size:6.4px;color:#5a5a5a">Search...</div>
<svg style="left:933px;top:69.4px" width="8" height="7" viewBox="0 0 8 7"><path d="M0.3 0.8 H3 L3.8 1.8 H7.7 V6.6 H0.3 Z" fill="#c8c8c8"/><path d="M4 2.8 V5.6 M2.6 4.2 H5.4" stroke="#242424" stroke-width="0.8"/></svg>
<svg style="left:945px;top:69px" width="8" height="8" viewBox="0 0 8 8"><circle cx="4" cy="4" r="2.3" fill="none" stroke="#c8c8c8" stroke-width="1.1"/><path d="M4 0.2 V1.5 M4 6.5 V7.8 M0.2 4 H1.5 M6.5 4 H7.8 M1.3 1.3 L2.2 2.2 M5.8 5.8 L6.7 6.7 M1.3 6.7 L2.2 5.8 M5.8 2.2 L6.7 1.3" stroke="#c8c8c8" stroke-width="1"/></svg>
<div class="a" style="left:768px;top:80.2px;width:182.4px;height:12.4px;background:#2f2f2f"></div>
<div class="a" style="left:780.6px;top:80.2px;width:0.8px;height:12.4px;background:#1c1c1c"></div>
<div class="a" style="left:792.6px;top:80.2px;width:0.8px;height:12.4px;background:#1c1c1c"></div>
<div class="a" style="left:905.4px;top:80.2px;width:0.8px;height:12.4px;background:#1c1c1c"></div>
<svg style="left:770px;top:84px" width="7.4" height="5" viewBox="0 0 7.4 5"><path d="M0.4 2.5 Q3.7 -1.2 7 2.5 Q3.7 6.2 0.4 2.5 Z" fill="none" stroke="#b8b8b8" stroke-width="0.7"/><circle cx="3.7" cy="2.5" r="1.1" fill="#b8b8b8"/></svg>
<svg style="left:783.6px;top:82.6px" width="5" height="8" viewBox="0 0 5 8"><path d="M1.4 0.4 H3.6 V3 L4.6 4.2 H0.4 L1.4 3 Z" fill="#c0c0c0"/><path d="M2.5 4.2 V7.6" stroke="#c0c0c0" stroke-width="0.7"/></svg>
<div class="t" style="left:794.6px;top:86.5px;font-size:6.25px;color:#c8c8c8">Item Label</div>
<div class="t" style="left:907.6px;top:86.5px;font-size:6.25px;color:#c8c8c8">Type</div>
<div class="a" style="left:768px;top:92.6px;width:182.4px;height:49px;background:#3f556e;overflow:hidden">
<svg style="left:2px;top:1.8px" width="7.4" height="5" viewBox="0 0 7.4 5"><path d="M0.4 2.5 Q3.7 -1.2 7 2.5 Q3.7 6.2 0.4 2.5 Z" fill="none" stroke="#e0e0e0" stroke-width="0.7"/><circle cx="3.7" cy="2.5" r="1.1" fill="#e0e0e0"/></svg>
<svg style="left:39.6px;top:0.2px" width="8.4" height="8" viewBox="0 0 8.4 8"><path d="M1 2.6 L4.6 0.8 L7.6 2 L7.6 5.4 L4 7.4 L1 6 Z M1 2.6 L4 4 L7.6 2 M4 4 V7.4 M2.6 1.8 L5.8 3 V6.4 M1 4.3 L4 5.7 L7.6 3.7" fill="none" stroke="#d8d8d8" stroke-width="0.6"/></svg>
<div class="t" style="left:51.4px;top:4.2px;font-size:6.05px;font-weight:bold;color:#f0f0f0;width:87px;overflow:hidden">Cave_Walls86</div>
<div class="t" style="left:140.4px;top:4.2px;font-size:6.4px;color:#8fa0b4">StaticMeshAct</div>
<svg style="left:2px;top:11.8px" width="7.4" height="5" viewBox="0 0 7.4 5"><path d="M0.4 2.5 Q3.7 -1.2 7 2.5 Q3.7 6.2 0.4 2.5 Z" fill="none" stroke="#e0e0e0" stroke-width="0.7"/><circle cx="3.7" cy="2.5" r="1.1" fill="#e0e0e0"/></svg>
<svg style="left:39.6px;top:10.2px" width="8.4" height="8" viewBox="0 0 8.4 8"><path d="M1 2.6 L4.6 0.8 L7.6 2 L7.6 5.4 L4 7.4 L1 6 Z M1 2.6 L4 4 L7.6 2 M4 4 V7.4 M2.6 1.8 L5.8 3 V6.4 M1 4.3 L4 5.7 L7.6 3.7" fill="none" stroke="#d8d8d8" stroke-width="0.6"/></svg>
<div class="t" style="left:51.4px;top:14.2px;font-size:6.05px;font-weight:bold;color:#f0f0f0;width:87px;overflow:hidden">Cave_Walls87</div>
<div class="t" style="left:140.4px;top:14.2px;font-size:6.4px;color:#8fa0b4">StaticMeshAct</div>
<svg style="left:2px;top:21.8px" width="7.4" height="5" viewBox="0 0 7.4 5"><path d="M0.4 2.5 Q3.7 -1.2 7 2.5 Q3.7 6.2 0.4 2.5 Z" fill="none" stroke="#e0e0e0" stroke-width="0.7"/><circle cx="3.7" cy="2.5" r="1.1" fill="#e0e0e0"/></svg>
<svg style="left:39.6px;top:20.2px" width="8.4" height="8" viewBox="0 0 8.4 8"><path d="M1 2.6 L4.6 0.8 L7.6 2 L7.6 5.4 L4 7.4 L1 6 Z M1 2.6 L4 4 L7.6 2 M4 4 V7.4 M2.6 1.8 L5.8 3 V6.4 M1 4.3 L4 5.7 L7.6 3.7" fill="none" stroke="#d8d8d8" stroke-width="0.6"/></svg>
<div class="t" style="left:51.4px;top:24.2px;font-size:6.05px;font-weight:bold;color:#f0f0f0;width:87px;overflow:hidden">Cave_Walls88</div>
<div class="t" style="left:140.4px;top:24.2px;font-size:6.4px;color:#8fa0b4">StaticMeshAct</div>
<svg style="left:2px;top:31.8px" width="7.4" height="5" viewBox="0 0 7.4 5"><path d="M0.4 2.5 Q3.7 -1.2 7 2.5 Q3.7 6.2 0.4 2.5 Z" fill="none" stroke="#e0e0e0" stroke-width="0.7"/><circle cx="3.7" cy="2.5" r="1.1" fill="#e0e0e0"/></svg>
<svg style="left:39.6px;top:30.2px" width="8.4" height="8" viewBox="0 0 8.4 8"><path d="M1 2.6 L4.6 0.8 L7.6 2 L7.6 5.4 L4 7.4 L1 6 Z M1 2.6 L4 4 L7.6 2 M4 4 V7.4 M2.6 1.8 L5.8 3 V6.4 M1 4.3 L4 5.7 L7.6 3.7" fill="none" stroke="#d8d8d8" stroke-width="0.6"/></svg>
<div class="t" style="left:51.4px;top:34.2px;font-size:6.05px;font-weight:bold;color:#f0f0f0;width:87px;overflow:hidden">S_Limestone_Slab_ub3rcjzda_</div>
<div class="t" style="left:140.4px;top:34.2px;font-size:6.4px;color:#8fa0b4">StaticMeshAct</div>
<svg style="left:2px;top:41.8px" width="7.4" height="5" viewBox="0 0 7.4 5"><path d="M0.4 2.5 Q3.7 -1.2 7 2.5 Q3.7 6.2 0.4 2.5 Z" fill="none" stroke="#e0e0e0" stroke-width="0.7"/><circle cx="3.7" cy="2.5" r="1.1" fill="#e0e0e0"/></svg>
<svg style="left:39.6px;top:40.2px" width="8.4" height="8" viewBox="0 0 8.4 8"><path d="M1 2.6 L4.6 0.8 L7.6 2 L7.6 5.4 L4 7.4 L1 6 Z M1 2.6 L4 4 L7.6 2 M4 4 V7.4 M2.6 1.8 L5.8 3 V6.4 M1 4.3 L4 5.7 L7.6 3.7" fill="none" stroke="#d8d8d8" stroke-width="0.6"/></svg>
<div class="t" style="left:51.4px;top:44.2px;font-size:6.05px;font-weight:bold;color:#f0f0f0;width:87px;overflow:hidden">S_Limestone_Slab_ub3rcjzda_</div>
<div class="t" style="left:140.4px;top:44.2px;font-size:6.4px;color:#8fa0b4">StaticMeshAct</div>
</div>
<div class="a" style="left:950.4px;top:80.2px;width:7.6px;height:61.4px;background:#1c1c1c"></div>
<div class="a" style="left:952.3px;top:123px;width:3.2px;height:17px;background:#6a6a6a;border-radius:1.6px"></div>
<div class="t" style="left:774.6px;top:149.8px;font-size:6.3px;color:#c0c0c0">2,150 actors (333 selected)</div>
<div class="ptab" style="top:160.8px;height:12px"></div>
<svg style="left:770.6px;top:163px" width="8" height="8" viewBox="0 0 8 8"><path d="M1.4 5 L5.6 0.8 L7 2.2 L2.8 6.4 L0.8 7 Z" fill="#d0d0d0"/><path d="M3.6 7.2 H7.6" stroke="#d0d0d0" stroke-width="0.7"/></svg>
<div class="t" style="left:781px;top:166.6px;font-size:6.5px;color:#d0d0d0">Details</div>
<svg style="left:836.3px;top:164.4px" width="4" height="4" viewBox="0 0 4 4"><path d="M0.4 0.4 L3.6 3.6 M3.6 0.4 L0.4 3.6" stroke="#d0d0d0" stroke-width="0.7"/></svg>
<div class="panel" style="left:768px;top:172.6px;width:190px;height:329.4px"></div>
<svg style="left:773.4px;top:177px" width="8" height="9" viewBox="0 0 8 9"><circle cx="4" cy="3" r="2.7" fill="#c8c8c8"/><circle cx="4.6" cy="2.6" r="1" fill="#242424"/><path d="M1.6 6 H6.4 L7.4 8.4 H0.6 Z" fill="#c8c8c8"/></svg>
<div class="t" style="left:862.7px;top:181.9px;font-size:6.45px;color:#c8c8c8">333 objects</div>
<svg style="left:944.6px;top:177px" width="7" height="8" viewBox="0 0 7 8"><rect x="0.4" y="3.6" width="4.6" height="3.8" fill="#c8c8c8"/><path d="M3.8 3.6 V2 Q3.8 0.5 5.2 0.5 Q6.6 0.5 6.6 2 V2.8" fill="none" stroke="#c8c8c8" stroke-width="0.8"/></svg>
<div class="a" style="left:771.3px;top:190.2px;width:144.2px;height:10.4px;background:#0f0f0f;border-radius:5.2px;border:0.7px solid #343434"></div>
<svg style="left:774.3px;top:191.8px" width="7.4" height="7.6" viewBox="0 0 7.4 7.6"><circle cx="3" cy="3" r="2.4" fill="none" stroke="#d0d0d0" stroke-width="0.9"/><path d="M4.8 4.9 L6.8 7" stroke="#d0d0d0" stroke-width="1"/></svg>
<div class="t" style="left:785.6px;top:195.2px;font-size:6.4px;color:#5a5a5a">Search</div>
<svg style="left:922px;top:192px" width="7.4" height="7" viewBox="0 0 7.4 7"><rect x="0.4" y="0.4" width="6.6" height="6.2" fill="none" stroke="#d0d0d0" stroke-width="0.8"/><path d="M0.4 2.5 H7 M0.4 4.5 H7 M2.6 0.4 V6.6" stroke="#d0d0d0" stroke-width="0.8"/></svg>
<svg style="left:936px;top:191.8px" width="7.4" height="7.2" viewBox="0 0 7.4 7.2"><path d="M3.7 0.2 L4.8 2.5 L7.3 2.8 L5.4 4.5 L5.9 7 L3.7 5.7 L1.5 7 L2 4.5 L0.1 2.8 L2.6 2.5 Z" fill="#d0d0d0"/></svg>
<svg style="left:948px;top:191.6px" width="7.6" height="7.6" viewBox="0 0 8 8"><circle cx="4" cy="4" r="2.3" fill="none" stroke="#c8c8c8" stroke-width="1.1"/><path d="M4 0.2 V1.5 M4 6.5 V7.8 M0.2 4 H1.5 M6.5 4 H7.8 M1.3 1.3 L2.2 2.2 M5.8 5.8 L6.7 6.7 M1.3 6.7 L2.2 5.8 M5.8 2.2 L6.7 1.3" stroke="#c8c8c8" stroke-width="1"/></svg>
<div class="fb" style="left:772.7px;width:34.4px">General</div>
<div class="fb" style="left:810px;width:28.2px">Actor</div>
<div class="fb" style="left:841.5px;width:27.6px">Misc</div>
<div class="fb" style="left:871.8px;width:41.3px">Streaming</div>
<div class="fb" style="left:916.2px;width:21.2px;background:#0a6fe0;border-color:#0a6fe0;color:#fff">All</div>
<div class="a" style="left:768px;top:218.5px;width:181.4px;height:283.5px;background:#161616"></div>
<div class="hdr" style="top:218.50px;height:13.79px"></div><div class="a" style="left:768px;top:218.10px;width:181.4px;height:0.9px;background:#191919"></div><svg style="left:770.6px;top:224.15px" width="5.4" height="3.6" viewBox="0 0 5.4 3.6"><path d="M0.2 0.2 H5.2 L2.7 3.4 Z" fill="#a8a8a8"/></svg><div class="hl" style="top:225.84px">Transform</div>
<div class="row" style="top:231.99px;height:13.79px"></div><div class="a" style="left:768px;top:231.59px;width:181.4px;height:0.9px;background:#191919"></div>
<div class="a" style="left:840.2px;top:231.99px;width:0.7px;height:13.79px;background:#181818"></div>
<div class="a" style="left:938.2px;top:231.99px;width:0.7px;height:13.79px;background:#181818"></div>
<div class="inp" style="left:779.6px;top:234.34px;width:42.2px;height:10px"></div><div class="t" style="left:783.6px;top:239.34px;color:#c0c0c0;font-size:5.6px">Location</div><svg style="left:811px;top:237.53px" width="4.6" height="3.2" viewBox="0 0 4.6 3.2"><path d="M0.4 0.5 L2.3 2.5 L4.2 0.5" fill="none" stroke="#c8c8c8" stroke-width="0.8"/></svg>
<div class="mul" style="left:847.3px;top:235.34px"><i style="background:#b2361c"></i>Multiple</div>
<div class="mul" style="left:877.3px;top:235.34px"><i style="background:#5f9a1c"></i>Multiple</div>
<div class="mul" style="left:907.3px;top:235.34px"><i style="background:#2a6fd0"></i>Multiple</div>
<svg style="left:940.6px;top:236.53px" width="6" height="5.6" viewBox="0 0 6 5.6"><path d="M2.4 0.6 L0.6 2.2 L2.4 3.8 M0.8 2.2 H4 Q5.4 2.2 5.4 3.6 Q5.4 5 4 5 H3" fill="none" stroke="#b8b8b8" stroke-width="0.75"/></svg>
<div class="row" style="top:245.48px;height:13.79px"></div><div class="a" style="left:768px;top:245.08px;width:181.4px;height:0.9px;background:#191919"></div>
<div class="a" style="left:840.2px;top:245.48px;width:0.7px;height:13.79px;background:#181818"></div>
<div class="a" style="left:938.2px;top:245.48px;width:0.7px;height:13.79px;background:#181818"></div>
<div class="inp" style="left:779.6px;top:247.82px;width:42.2px;height:10px"></div><div class="t" style="left:783.6px;top:252.82px;color:#c0c0c0;font-size:5.6px">Rotation</div><svg style="left:811px;top:251.02px" width="4.6" height="3.2" viewBox="0 0 4.6 3.2"><path d="M0.4 0.5 L2.3 2.5 L4.2 0.5" fill="none" stroke="#c8c8c8" stroke-width="0.8"/></svg>
<div class="mul" style="left:847.3px;top:248.82px"><i style="background:#b2361c"></i>Multiple</div>
<div class="mul" style="left:877.3px;top:248.82px"><i style="background:#5f9a1c"></i>Multiple</div>
<div class="mul" style="left:907.3px;top:248.82px"><i style="background:#2a6fd0"></i>Multiple</div>
<svg style="left:940.6px;top:250.02px" width="6" height="5.6" viewBox="0 0 6 5.6"><path d="M2.4 0.6 L0.6 2.2 L2.4 3.8 M0.8 2.2 H4 Q5.4 2.2 5.4 3.6 Q5.4 5 4 5 H3" fill="none" stroke="#b8b8b8" stroke-width="0.75"/></svg>
<div class="row" style="top:258.97px;height:13.79px"></div><div class="a" style="left:768px;top:258.57px;width:181.4px;height:0.9px;background:#191919"></div>
<div class="a" style="left:840.2px;top:258.97px;width:0.7px;height:13.79px;background:#181818"></div>
<div class="a" style="left:938.2px;top:258.97px;width:0.7px;height:13.79px;background:#181818"></div>
<div class="inp" style="left:779.6px;top:261.32px;width:42.2px;height:10px"></div><div class="t" style="left:783.6px;top:266.32px;color:#c0c0c0;font-size:5.6px">Scale</div><svg style="left:811px;top:264.52px" width="4.6" height="3.2" viewBox="0 0 4.6 3.2"><path d="M0.4 0.5 L2.3 2.5 L4.2 0.5" fill="none" stroke="#c8c8c8" stroke-width="0.8"/></svg>
<div class="mul" style="left:847.3px;top:262.32px"><i style="background:#b2361c"></i>Multiple</div>
<div class="mul" style="left:877.3px;top:262.32px"><i style="background:#5f9a1c"></i>Multiple</div>
<div class="mul" style="left:907.3px;top:262.32px"><i style="background:#2a6fd0"></i>Multiple</div>
<svg style="left:940.6px;top:263.52px" width="6" height="5.6" viewBox="0 0 6 5.6"><path d="M2.4 0.6 L0.6 2.2 L2.4 3.8 M0.8 2.2 H4 Q5.4 2.2 5.4 3.6 Q5.4 5 4 5 H3" fill="none" stroke="#b8b8b8" stroke-width="0.75"/></svg>
<svg style="left:826px;top:262.32px" width="7" height="8" viewBox="0 0 7 8"><rect x="0.4" y="3.6" width="4.6" height="3.8" fill="#c8c8c8"/><path d="M3.8 3.6 V2 Q3.8 0.5 5.2 0.5 Q6.6 0.5 6.6 2 V2.8" fill="none" stroke="#c8c8c8" stroke-width="0.8"/></svg>
<div class="hdr" style="top:272.46px;height:13.79px"></div><div class="a" style="left:768px;top:272.06px;width:181.4px;height:0.9px;background:#191919"></div><svg style="left:770.6px;top:278.11px" width="5.4" height="3.6" viewBox="0 0 5.4 3.6"><path d="M0.2 0.2 H5.2 L2.7 3.4 Z" fill="#a8a8a8"/></svg><div class="hl" style="top:279.81px">Rendering</div>
<div class="row" style="top:285.95px;height:13.79px"></div><div class="a" style="left:768px;top:285.55px;width:181.4px;height:0.9px;background:#191919"></div>
<div class="a" style="left:840.2px;top:285.95px;width:0.7px;height:13.79px;background:#181818"></div>
<div class="a" style="left:938.2px;top:285.95px;width:0.7px;height:13.79px;background:#181818"></div>
<div class="rl" style="top:293.30px">Actor Hidden In Game</div>
<div class="cb" style="top:288.69px"></div>
<div class="row" style="top:299.44px;height:13.79px"></div><div class="a" style="left:768px;top:299.04px;width:181.4px;height:0.9px;background:#191919"></div>
<div class="a" style="left:840.2px;top:299.44px;width:0.7px;height:13.79px;background:#181818"></div>
<div class="a" style="left:938.2px;top:299.44px;width:0.7px;height:13.79px;background:#181818"></div>
<div class="rl" style="top:306.79px">Editor Billboard Scale</div>
<div class="inp" style="left:847.4px;top:302.09px;width:62px;height:9.6px"></div><div class="t" style="left:851.6px;top:306.79px;color:#d8d8d8;font-size:5.8px">1.0</div>
<div class="hdr" style="top:312.93px;height:13.79px"></div><div class="a" style="left:768px;top:312.53px;width:181.4px;height:0.9px;background:#191919"></div><svg style="left:770.6px;top:318.58px" width="5.4" height="3.6" viewBox="0 0 5.4 3.6"><path d="M0.2 0.2 H5.2 L2.7 3.4 Z" fill="#a8a8a8"/></svg><div class="hl" style="top:320.28px">Replication</div>
<div class="row" style="top:326.42px;height:13.79px"></div><div class="a" style="left:768px;top:326.02px;width:181.4px;height:0.9px;background:#191919"></div>
<div class="a" style="left:840.2px;top:326.42px;width:0.7px;height:13.79px;background:#181818"></div>
<div class="a" style="left:938.2px;top:326.42px;width:0.7px;height:13.79px;background:#181818"></div>
<div class="rl" style="top:333.77px">Net Load on Client</div>
<div class="cb" style="top:329.17px"></div><svg style="left:849px;top:330.87px" width="5.4" height="5" viewBox="0 0 5.4 5"><path d="M0.6 2.6 L2 4 L4.8 0.8" fill="none" stroke="#1f8fff" stroke-width="1.1"/></svg>
<div class="hdr" style="top:339.91px;height:13.79px"></div><div class="a" style="left:768px;top:339.51px;width:181.4px;height:0.9px;background:#191919"></div><svg style="left:770.6px;top:345.56px" width="5.4" height="3.6" viewBox="0 0 5.4 3.6"><path d="M0.2 0.2 H5.2 L2.7 3.4 Z" fill="#a8a8a8"/></svg><div class="hl" style="top:347.25px">Collision</div>
<div class="row" style="top:353.40px;height:13.79px"></div><div class="a" style="left:768px;top:353.00px;width:181.4px;height:0.9px;background:#191919"></div>
<div class="a" style="left:840.2px;top:353.40px;width:0.7px;height:13.79px;background:#181818"></div>
<div class="a" style="left:938.2px;top:353.40px;width:0.7px;height:13.79px;background:#181818"></div>
<div class="rl" style="top:360.75px">Generate Overlap Even...</div>
<div class="cb" style="top:356.14px"></div>
<div class="row" style="top:366.89px;height:13.79px"></div><div class="a" style="left:768px;top:366.49px;width:181.4px;height:0.9px;background:#191919"></div>
<div class="a" style="left:840.2px;top:366.89px;width:0.7px;height:13.79px;background:#181818"></div>
<div class="a" style="left:938.2px;top:366.89px;width:0.7px;height:13.79px;background:#181818"></div>
<div class="rl" style="top:374.24px">Update Overlaps Meth...</div>
<div class="inp" style="left:847.4px;top:369.24px;width:63.8px;height:10px"></div><div class="t" style="left:850.8px;top:374.24px;color:#d0d0d0;font-size:5.55px">Use Config Default</div><svg style="left:900.6px;top:372.44px" width="4.6" height="3.2" viewBox="0 0 4.6 3.2"><path d="M0.4 0.5 L2.3 2.5 L4.2 0.5" fill="none" stroke="#c8c8c8" stroke-width="0.8"/></svg>
<div class="row" style="top:380.38px;height:13.79px"></div><div class="a" style="left:768px;top:379.98px;width:181.4px;height:0.9px;background:#191919"></div>
<div class="a" style="left:840.2px;top:380.38px;width:0.7px;height:13.79px;background:#181818"></div>
<div class="a" style="left:938.2px;top:380.38px;width:0.7px;height:13.79px;background:#181818"></div>
<div class="rl" style="top:387.73px">Default Update Overla...</div>
<div class="inp" style="left:847px;top:382.73px;width:71.2px;height:10px;background:#353535;border-color:#353535"></div><div class="t" style="left:850.8px;top:387.73px;color:#7a7a7a;font-size:5.55px">Only Update Movable</div><svg style="left:907.6px;top:385.93px" width="4.6" height="3.2" viewBox="0 0 4.6 3.2"><path d="M0.4 0.5 L2.3 2.5 L4.2 0.5" fill="none" stroke="#7a7a7a" stroke-width="0.8"/></svg>
<div class="row" style="top:393.87px;height:13.79px"></div><div class="a" style="left:768px;top:393.47px;width:181.4px;height:0.9px;background:#191919"></div>
<svg style="left:771.6px;top:398.52px" width="3.6" height="5.4" viewBox="0 0 3.6 5.4"><path d="M0.2 0.2 V5.2 L3.4 2.7 Z" fill="#8a8a8a"/></svg><div class="rl" style="top:401.22px">Advanced</div>
<div class="hdr" style="top:407.36px;height:13.79px"></div><div class="a" style="left:768px;top:406.96px;width:181.4px;height:0.9px;background:#191919"></div><svg style="left:770.6px;top:413.01px" width="5.4" height="3.6" viewBox="0 0 5.4 3.6"><path d="M0.2 0.2 H5.2 L2.7 3.4 Z" fill="#a8a8a8"/></svg><div class="hl" style="top:414.71px">HLOD</div>
<div class="row" style="top:420.85px;height:13.79px"></div><div class="a" style="left:768px;top:420.45px;width:181.4px;height:0.9px;background:#191919"></div>
<div class="a" style="left:840.2px;top:420.85px;width:0.7px;height:13.79px;background:#181818"></div>
<div class="a" style="left:938.2px;top:420.85px;width:0.7px;height:13.79px;background:#181818"></div>
<div class="rl" style="top:428.20px">Include Actor in HLOD</div>
<div class="cb" style="top:423.60px"></div><svg style="left:849px;top:425.30px" width="5.4" height="5" viewBox="0 0 5.4 5"><path d="M0.6 2.6 L2 4 L4.8 0.8" fill="none" stroke="#1f8fff" stroke-width="1.1"/></svg>
<div class="hdr" style="top:434.34px;height:13.79px"></div><div class="a" style="left:768px;top:433.94px;width:181.4px;height:0.9px;background:#191919"></div><svg style="left:770.6px;top:439.99px" width="5.4" height="3.6" viewBox="0 0 5.4 3.6"><path d="M0.2 0.2 H5.2 L2.7 3.4 Z" fill="#a8a8a8"/></svg><div class="hl" style="top:441.69px">Actor</div>
<div class="row" style="top:447.83px;height:13.79px"></div><div class="a" style="left:768px;top:447.43px;width:181.4px;height:0.9px;background:#191919"></div>
<div class="a" style="left:840.2px;top:447.83px;width:0.7px;height:13.79px;background:#181818"></div>
<div class="a" style="left:938.2px;top:447.83px;width:0.7px;height:13.79px;background:#181818"></div>
<div class="rl" style="top:455.18px">Can be Damaged</div>
<div class="cb" style="top:450.58px"></div><div class="a" style="left:849.6px;top:454.08px;width:3.8px;height:1.3px;background:#1f8fff"></div>
<div class="row" style="top:461.32px;height:13.79px"></div><div class="a" style="left:768px;top:460.92px;width:181.4px;height:0.9px;background:#191919"></div>
<div class="a" style="left:840.2px;top:461.32px;width:0.7px;height:13.79px;background:#181818"></div>
<div class="a" style="left:938.2px;top:461.32px;width:0.7px;height:13.79px;background:#181818"></div>
<div class="rl" style="top:468.67px">Initial Life Span</div>
<div class="inp" style="left:847.4px;top:463.97px;width:62px;height:9.6px"></div><div class="t" style="left:851.6px;top:468.67px;color:#d8d8d8;font-size:5.8px">0.0</div>
<div class="row" style="top:474.81px;height:13.79px"></div><div class="a" style="left:768px;top:474.41px;width:181.4px;height:0.9px;background:#191919"></div>
<div class="a" style="left:840.2px;top:474.81px;width:0.7px;height:13.79px;background:#181818"></div>
<div class="a" style="left:938.2px;top:474.81px;width:0.7px;height:13.79px;background:#181818"></div>
<div class="rl" style="top:482.16px">Spawn Collision Handli...</div>
<div class="inp" style="left:847.4px;top:477.16px;width:89px;height:10px"></div><div class="t" style="left:850.8px;top:482.16px;color:#d0d0d0;font-size:5.55px;width:72.6px;overflow:hidden">Always Spawn, Ignore Collisions</div><svg style="left:926px;top:480.36px" width="4.6" height="3.2" viewBox="0 0 4.6 3.2"><path d="M0.4 0.5 L2.3 2.5 L4.2 0.5" fill="none" stroke="#c8c8c8" stroke-width="0.8"/></svg>
<div class="row" style="top:488.30px;height:13.70px"></div><div class="a" style="left:768px;top:487.90px;width:181.4px;height:0.9px;background:#191919"></div>
<div class="a" style="left:840.2px;top:488.30px;width:0.7px;height:13.70px;background:#181818"></div>
<div class="a" style="left:938.2px;top:488.30px;width:0.7px;height:13.70px;background:#181818"></div>
<div class="rl" style="top:495.65px">333 selected in</div>
<div class="t" style="left:847px;top:495.65px;color:#c0c0c0;font-size:5.78px">Persistent Level</div>
<div class="a" style="left:949.4px;top:218.5px;width:8.6px;height:283.5px;background:#1c1c1c"></div>
<div class="a" style="left:951.6px;top:220px;width:3.6px;height:245.5px;background:#5c5c5c;border-radius:1.8px"></div>
<!--/RIGHT-->
<!--BOTTOM-->
<div class="a" id="status"></div>
<div class="a" style="left:0;top:504px;width:1px;height:15.5px;background:#151515"></div><div class="a" style="left:65px;top:504px;width:2px;height:15.5px;background:#181818"></div>
<div class="a" style="left:122px;top:504px;width:2px;height:15.5px;background:#181818"></div>
<div class="a" style="left:301px;top:504px;width:2px;height:15.5px;background:#181818"></div>
<svg style="left:5.5px;top:508.4px" width="8" height="7" viewBox="0 0 8 7"><path d="M0.4 0.6 H3 L3.8 1.6 H6.6 V3 H2.6 V6.4 H0.4 Z" fill="#b0b0b0"/><rect x="3.2" y="3.4" width="4.4" height="3" fill="#b0b0b0"/></svg>
<div class="t" style="left:15.6px;top:511.8px;font-size:6.3px;color:#c8c8c8">Content Drawer</div>
<svg style="left:71.6px;top:507.8px" width="7" height="8" viewBox="0 0 7 8"><path d="M0.5 1 H2 V0.2 H2.8 V1 H4.2 V0.2 H5 V1 H6.5 V7.6 H0.5 Z" fill="#b8b8b8"/><path d="M2 3 L3.5 4.4 L5 3 M2 5.8 H5" stroke="#232323" stroke-width="0.8" fill="none"/></svg>
<div class="t" style="left:81.6px;top:511.8px;font-size:6.3px;color:#c8c8c8">Output Log</div>
<svg style="left:125.6px;top:508.4px" width="8" height="7" viewBox="0 0 8 7"><rect x="0.4" y="0.4" width="7.2" height="6" rx="0.6" fill="none" stroke="#c0c0c0" stroke-width="0.8"/><path d="M1.8 2.2 L3.2 3.4 L1.8 4.6 M4 4.8 H6" stroke="#c0c0c0" stroke-width="0.7" fill="none"/></svg>
<div class="t" style="left:135.6px;top:511.8px;font-size:6.3px;color:#c8c8c8">Cmd</div>
<svg style="left:151.6px;top:510.2px" width="4.6" height="3.2" viewBox="0 0 4.6 3.2"><path d="M0.4 0.5 L2.3 2.5 L4.2 0.5" fill="none" stroke="#c8c8c8" stroke-width="0.8"/></svg>
<div class="a" style="left:163.5px;top:506.6px;width:133.6px;height:10.3px;background:#0e0e0e;border-radius:2px;border:0.6px solid #2e2e2e"></div>
<div class="t" style="left:168px;top:512.6px;font-size:5.4px;color:#505050;font-family:'Liberation Mono',monospace">Enter Console Command</div>
<!-- right status -->
<div class="a" style="left:781.4px;top:504px;width:1.6px;height:15.5px;background:#181818"></div>
<div class="a" style="left:848.8px;top:504px;width:1.4px;height:15.5px;background:#181818"></div>
<div class="a" style="left:880px;top:504px;width:1.6px;height:15.5px;background:#181818"></div><div class="a" style="left:958px;top:504px;width:2px;height:15.5px;background:#181818"></div>
<svg style="left:788px;top:508px" width="7.4" height="7.6" viewBox="0 0 7.4 7.6"><path d="M0.3 0.4 H7.1 V2 H0.3 Z M0.3 2.9 H7.1 V4.5 H0.3 Z M0.3 5.4 H7.1 V7 H0.3 Z" fill="#c0c0c0"/><path d="M4.6 0.4 V7" stroke="#232323" stroke-width="0.6"/></svg>
<div class="t" style="left:797px;top:512.2px;font-size:6.3px;color:#c8c8c8">Derived Data</div>

<svg style="left:840.4px;top:514px" width="3" height="3" viewBox="0 0 3 3"><path d="M2.6 0.2 V2.6 H0.2" fill="none" stroke="#888" stroke-width="0.6"/></svg>
<svg style="left:856px;top:508.6px" width="7.4" height="6.6" viewBox="0 0 7.4 6.6"><path d="M0.8 6.4 V3.6 M2.6 6.4 V2.4 M4.4 6.4 V3.2 M6.2 6.4 V1.2" stroke="#c0c0c0" stroke-width="1.1"/><path d="M0.4 1.8 L2.4 0.6 L4.4 1.6 L6.8 0.2" stroke="#c0c0c0" stroke-width="0.5" fill="none"/></svg>
<svg style="left:873.2px;top:508.8px" width="2" height="6.6" viewBox="0 0 2 6.6"><circle cx="1" cy="0.9" r="0.6" fill="#c0c0c0"/><circle cx="1" cy="3.3" r="0.6" fill="#c0c0c0"/><circle cx="1" cy="5.7" r="0.6" fill="#c0c0c0"/></svg>
<svg style="left:887.8px;top:508px" width="8" height="8" viewBox="0 0 8 8"><circle cx="4" cy="4" r="3.3" fill="none" stroke="#c8c8c8" stroke-width="0.9"/><path d="M1.7 6.3 L6.3 1.7" stroke="#c8c8c8" stroke-width="0.9"/></svg>
<div class="t" style="left:898.8px;top:512.2px;font-size:6.3px;color:#c8c8c8">Source Control Off</div>
<svg style="left:952.4px;top:514px" width="3" height="3" viewBox="0 0 3 3"><path d="M2.6 0.2 V2.6 H0.2" fill="none" stroke="#888" stroke-width="0.6"/></svg>
<!-- windows taskbar -->
<div class="a" id="taskbar"></div>
<div class="a" style="left:24.5px;top:519.7px;width:170.5px;height:20.3px;background:#fdfdfd"></div>
<svg style="left:6.6px;top:526px" width="8" height="8" viewBox="0 0 8 8"><path d="M0 1.1 L3.5 0.6 V3.8 H0 Z M4 0.55 L8 0 V3.8 H4 Z M0 4.3 H3.5 V7.4 L0 6.9 Z M4 4.3 H8 V8 L4 7.45 Z" fill="#1a1a1a"/></svg>
<svg style="left:29.6px;top:526px" width="8" height="8" viewBox="0 0 8 8"><circle cx="4.9" cy="3.1" r="2.5" fill="none" stroke="#333" stroke-width="0.8"/><path d="M3 5 L0.5 7.5" stroke="#333" stroke-width="0.9"/></svg>
<div class="t" style="left:44px;top:531.3px;font-size:7.1px;color:#4a4a4a">Type here to search</div>
<svg style="left:157px;top:520px" width="38" height="20" viewBox="0 0 38 20"><path d="M2.6 8 l0.7 1.4 l1.5 0.4 l-1.4 0.7 l-0.4 1.6 l-0.8 -1.4 l-1.5 -0.3 l1.3 -0.8 z" fill="#d07ae8"/><path d="M13.4 5.2 Q10 3.4 6.2 4.6 M15.2 5 Q17.4 2.6 20.4 3.2 M12.6 7.4 Q10 7 8 8.4 M16 7 Q18 6 19.2 6.6" stroke="#86b840" stroke-width="0.8" fill="none"/><path d="M13.4 6.6 L9.4 9.2 L5.6 15 L4.8 20 H8.4 L11.4 17 L13.8 12 Z" fill="#8ec63a"/><path d="M15.6 6.6 L19.6 9 L24 14 L25.4 18.6 L22 18 L18 15.4 L15.2 12 Z" fill="#8ec63a"/><path d="M12 9 L8 13 M11.6 11.6 L6.6 16.4 M10.8 14.6 L6 19.6 M17 9 L21 12.6 M17.2 11.4 L23 16 M17.6 13.8 L24.6 18" stroke="#d452b4" stroke-width="1.1" fill="none"/><path d="M5.2 19 L5 20 M24.6 17 L25.4 18.6" stroke="#c848a8" stroke-width="0.8"/><ellipse cx="14.5" cy="12.6" rx="1.9" ry="7" fill="#7fb82e"/><path d="M14.5 6.4 V8.4 M14.5 9.6 V10.6 M14.5 12 V12.8 M14.5 14.4 V15 M14.5 17.6 V19.6" stroke="#d452b4" stroke-width="1.4"/><path d="M32.2 20 Q31.6 12 32.4 2.6" stroke="#6aa83a" stroke-width="0.9" fill="none"/><circle cx="33.2" cy="4" r="1.2" fill="#d864c4"/><circle cx="30.2" cy="6" r="1.5" fill="#c040ac"/><circle cx="34.2" cy="7.8" r="1.5" fill="#c848b4"/><circle cx="28.6" cy="10.6" r="2" fill="#b838a4"/><circle cx="31" cy="9.4" r="1.4" fill="#d460c0"/><circle cx="34.2" cy="13" r="1.9" fill="#c040ac"/><circle cx="29.4" cy="16" r="2" fill="#bc3ca8"/><circle cx="32.4" cy="16.4" r="1.2" fill="#d868c6"/><circle cx="24.5" cy="6" r="0.9" fill="#f7a21c"/><circle cx="35.7" cy="16.7" r="0.8" fill="#3cc0e8"/></svg>
<svg style="left:203.5px;top:526px" width="8" height="8" viewBox="0 0 8 8"><circle cx="4" cy="4" r="3.1" fill="none" stroke="#222" stroke-width="1.1"/></svg>
<svg style="left:227.4px;top:526px" width="9" height="8" viewBox="0 0 9 8"><rect x="0.5" y="1.4" width="5.4" height="5" fill="none" stroke="#222" stroke-width="0.9"/><path d="M7.2 0.8 V7.2 M8.4 2 V3.2 M8.4 4.6 V5.8 M0.4 0.4 H1.6 M4.8 0.4 H6" stroke="#222" stroke-width="0.8"/></svg>
<svg style="left:252.4px;top:524.6px" width="10.4" height="11" viewBox="0 0 10.4 11"><path d="M3.2 2.6 V1.4 Q3.2 0.4 4.2 0.4 H6.2 Q7.2 0.4 7.2 1.4 V2.6" fill="none" stroke="#2a6fb8" stroke-width="0.8"/><rect x="0.4" y="2.4" width="9.6" height="8.2" rx="1" fill="#2668b4"/><rect x="3" y="4.4" width="1.9" height="1.9" fill="#f25022"/><rect x="5.4" y="4.4" width="1.9" height="1.9" fill="#7fba00"/><rect x="3" y="6.8" width="1.9" height="1.9" fill="#00a4ef"/><rect x="5.4" y="6.8" width="1.9" height="1.9" fill="#ffb900"/></svg>
<svg style="left:276px;top:525.4px" width="12" height="9" viewBox="0 0 12 9"><path d="M0.4 0.6 H2.8 L4.4 5.4 L6 0.6 H7 L8.6 5.4 L9.4 2.6 H11.6 L9.6 8.4 H7.6 L6.4 4.8 L5.2 8.4 H3.2 Z" fill="#e8301c"/></svg>
<svg style="left:300.4px;top:525px" width="11" height="10" viewBox="0 0 11 10"><path d="M0.4 1 H4 L5 2.2 H10.6 V8.8 H0.4 Z" fill="#f5b920"/><rect x="0.4" y="3.4" width="10.2" height="5.4" fill="#fbd44c"/><rect x="3" y="6.2" width="5" height="3.4" fill="#3a8fd8"/><rect x="4.2" y="7.4" width="2.6" height="2.2" fill="#e6e6e6"/></svg>
<svg style="left:325.4px;top:525px" width="11.4" height="10" viewBox="0 0 11.4 10"><path d="M0.4 4 L5.7 0.4 L11 4 V9.4 H0.4 Z" fill="#1f7fd4"/><path d="M1.6 3.6 H9.8 V7 H1.6 Z" fill="#e8f2fb"/><path d="M0.4 4.4 L5.7 7.6 L11 4.4 V9.4 H0.4 Z" fill="#3a9ae8"/></svg>
<svg style="left:350px;top:524.6px" width="11" height="11" viewBox="0 0 11 11"><circle cx="5.5" cy="5.5" r="5.1" fill="#1f7fc8"/><path d="M0.6 6.4 Q0.6 1.4 5.6 0.6 Q10 0.8 10.6 5 Q10 2.6 7 2.8 Q3.6 3.2 3.4 6.4 Q3.6 9.4 6.8 10.4 Q1.6 11 0.6 6.4 Z" fill="#35c09a"/><path d="M4 6.6 Q4.2 4.4 6.2 4.2 Q8 4.4 7.8 6 Q7.4 7 6.2 6.8 Q7.6 8 9.8 7 Q8.8 10 5.8 10.2 Q3.8 9 4 6.6 Z" fill="#0c5aa8"/></svg>
<svg style="left:374.4px;top:524.6px" width="11" height="11" viewBox="0 0 11 11"><circle cx="5.5" cy="5.5" r="5.3" fill="#5865f2"/><path d="M2.4 3.8 Q5.5 2.4 8.6 3.8 Q9.6 5.6 9.4 7.6 Q8.4 8.4 7.2 8.6 L6.8 7.8 Q5.5 8.2 4.2 7.8 L3.8 8.6 Q2.6 8.4 1.6 7.6 Q1.4 5.6 2.4 3.8 Z" fill="#fff"/><circle cx="4.2" cy="6" r="0.8" fill="#5865f2"/><circle cx="6.8" cy="6" r="0.8" fill="#5865f2"/></svg>
<div class="a" style="left:370.4px;top:538.6px;width:19.4px;height:1.4px;background:#e0405a"></div>
<div class="a" style="left:392.2px;top:519.4px;width:24.6px;height:20.6px;background:#efefee"></div>
<div class="a" style="left:392.2px;top:538.6px;width:24.6px;height:1.4px;background:#e0405a"></div>
<svg style="left:399px;top:524.6px" width="11" height="11" viewBox="0 0 21 21"><circle cx="10.5" cy="10.5" r="10" fill="#0a0a0a"/><path d="M6.2 7.2 L8.2 6.4 L8.2 12.6 Q8.2 14.4 10.3 14.4 Q12 14.4 12.1 12.8 L12.1 7.6 L11.2 7 L14.6 6.2 L14.2 7.2 L14.2 13 L15.4 12.4 Q14 15.8 10.4 16 Q6.9 15.9 6.9 13 L6.9 8 Z" fill="#fff"/></svg>
<!-- tray -->
<svg style="left:738.6px;top:525px" width="11" height="11" viewBox="0 0 11 11"><circle cx="5" cy="5" r="4.6" fill="#f79a1e"/><circle cx="4.2" cy="4.2" r="3" fill="#fbb03a"/><circle cx="9.2" cy="9" r="1.4" fill="#e8203a"/></svg>
<div class="t" style="left:754px;top:531.3px;font-size:6.9px;color:#2a2a2a">75°F&nbsp; Sunny</div>
<svg style="left:799px;top:528px" width="6.4" height="4" viewBox="0 0 6.4 4"><path d="M0.5 3.5 L3.2 0.7 L5.9 3.5" fill="none" stroke="#222" stroke-width="0.8"/></svg>
<div class="a" style="left:809.6px;top:525px;width:9.6px;height:10px;background:#fafcff"></div>
<svg style="left:810.4px;top:527px" width="8" height="6" viewBox="0 0 8 6"><path d="M2 5.4 Q0.4 5.2 0.5 3.8 Q0.7 2.6 2 2.6 Q2.6 0.6 4.4 0.6 Q6.2 0.8 6.4 2.6 Q7.6 2.8 7.5 4.2 Q7.3 5.4 6 5.4 Z" fill="none" stroke="#2878e0" stroke-width="0.8"/><path d="M4 4.8 V2.8 M3.2 3.6 L4 2.8 L4.8 3.6" stroke="#2878e0" stroke-width="0.6" fill="none"/></svg>
<svg style="left:822.4px;top:526.4px" width="8" height="7.4" viewBox="0 0 8 7.4"><rect x="0.5" y="1.6" width="4.6" height="4" rx="0.6" fill="none" stroke="#222" stroke-width="0.8"/><path d="M5.4 3 L7.4 1.8 V5.4 L5.4 4.2 M1.4 0.4 H5 M1.4 6.9 H5" stroke="#222" stroke-width="0.7" fill="none"/></svg>
<svg style="left:834.4px;top:525.6px" width="6.4" height="9" viewBox="0 0 6.4 9"><rect x="1.8" y="0.3" width="2.8" height="5" rx="1.4" fill="#222"/><path d="M0.5 3.8 Q0.5 6.6 3.2 6.6 Q5.9 6.6 5.9 3.8 M3.2 6.6 V8.4 M1.6 8.5 H4.8" stroke="#222" stroke-width="0.7" fill="none"/></svg>
<svg style="left:845.4px;top:527px" width="9.4" height="6" viewBox="0 0 9.4 6"><rect x="1.4" y="1" width="7.6" height="4.2" fill="#222"/><rect x="0.2" y="2.2" width="1.2" height="1.8" fill="#222"/><path d="M2.6 0.2 V1.2 M4 0.2 V1.2" stroke="#222" stroke-width="0.8"/></svg>
<svg style="left:859px;top:526.4px" width="8" height="7.4" viewBox="0 0 8 7.4"><path d="M1 6.6 Q1.2 2.4 6.8 1.2 M2.8 6.8 Q3 4.2 7 3.4 M4.8 6.9 Q5 5.6 7.2 5.4" stroke="#222" stroke-width="0.8" fill="none"/><circle cx="6.8" cy="6.6" r="0.7" fill="#222"/></svg>
<svg style="left:869.6px;top:526.4px" width="9" height="7.4" viewBox="0 0 9 7.4"><path d="M0.4 2.6 H1.8 L3.8 0.8 V6.6 L1.8 4.8 H0.4 Z" fill="none" stroke="#222" stroke-width="0.7"/><path d="M5 2.4 Q6 3.7 5 5 M6.2 1.4 Q7.8 3.7 6.2 6 M7.4 0.6 Q9.4 3.7 7.4 6.8" stroke="#222" stroke-width="0.6" fill="none"/></svg>
<div class="t" style="left:883.6px;top:531px;font-size:5.9px;color:#2a2a2a">ENG</div>
<div class="t" style="left:905px;top:526.3px;font-size:5.9px;color:#2a2a2a;width:21px;text-align:center">17:51</div>
<div class="t" style="left:899px;top:534.6px;font-size:5.9px;color:#2a2a2a;width:33px;text-align:center">23-07-2022</div>
<svg style="left:939px;top:525.6px" width="9" height="8" viewBox="0 0 9 8"><path d="M0.4 0.4 H8.4 V5.8 H3.4 L1.6 7.6 V5.8 H0.4 Z" fill="#222"/><path d="M1.8 2 H7 M1.8 3.8 H7" stroke="#dedede" stroke-width="0.6"/></svg>
<svg style="left:943.6px;top:529.4px" width="8" height="8" viewBox="0 0 8 8"><circle cx="4" cy="4" r="3.3" fill="#dedede" stroke="#333" stroke-width="0.5"/><text x="4" y="5.9" font-size="5.2" text-anchor="middle" fill="#222" font-family="Liberation Sans, sans-serif">6</text></svg>

<!--/BOTTOM-->
</body>
</html>
